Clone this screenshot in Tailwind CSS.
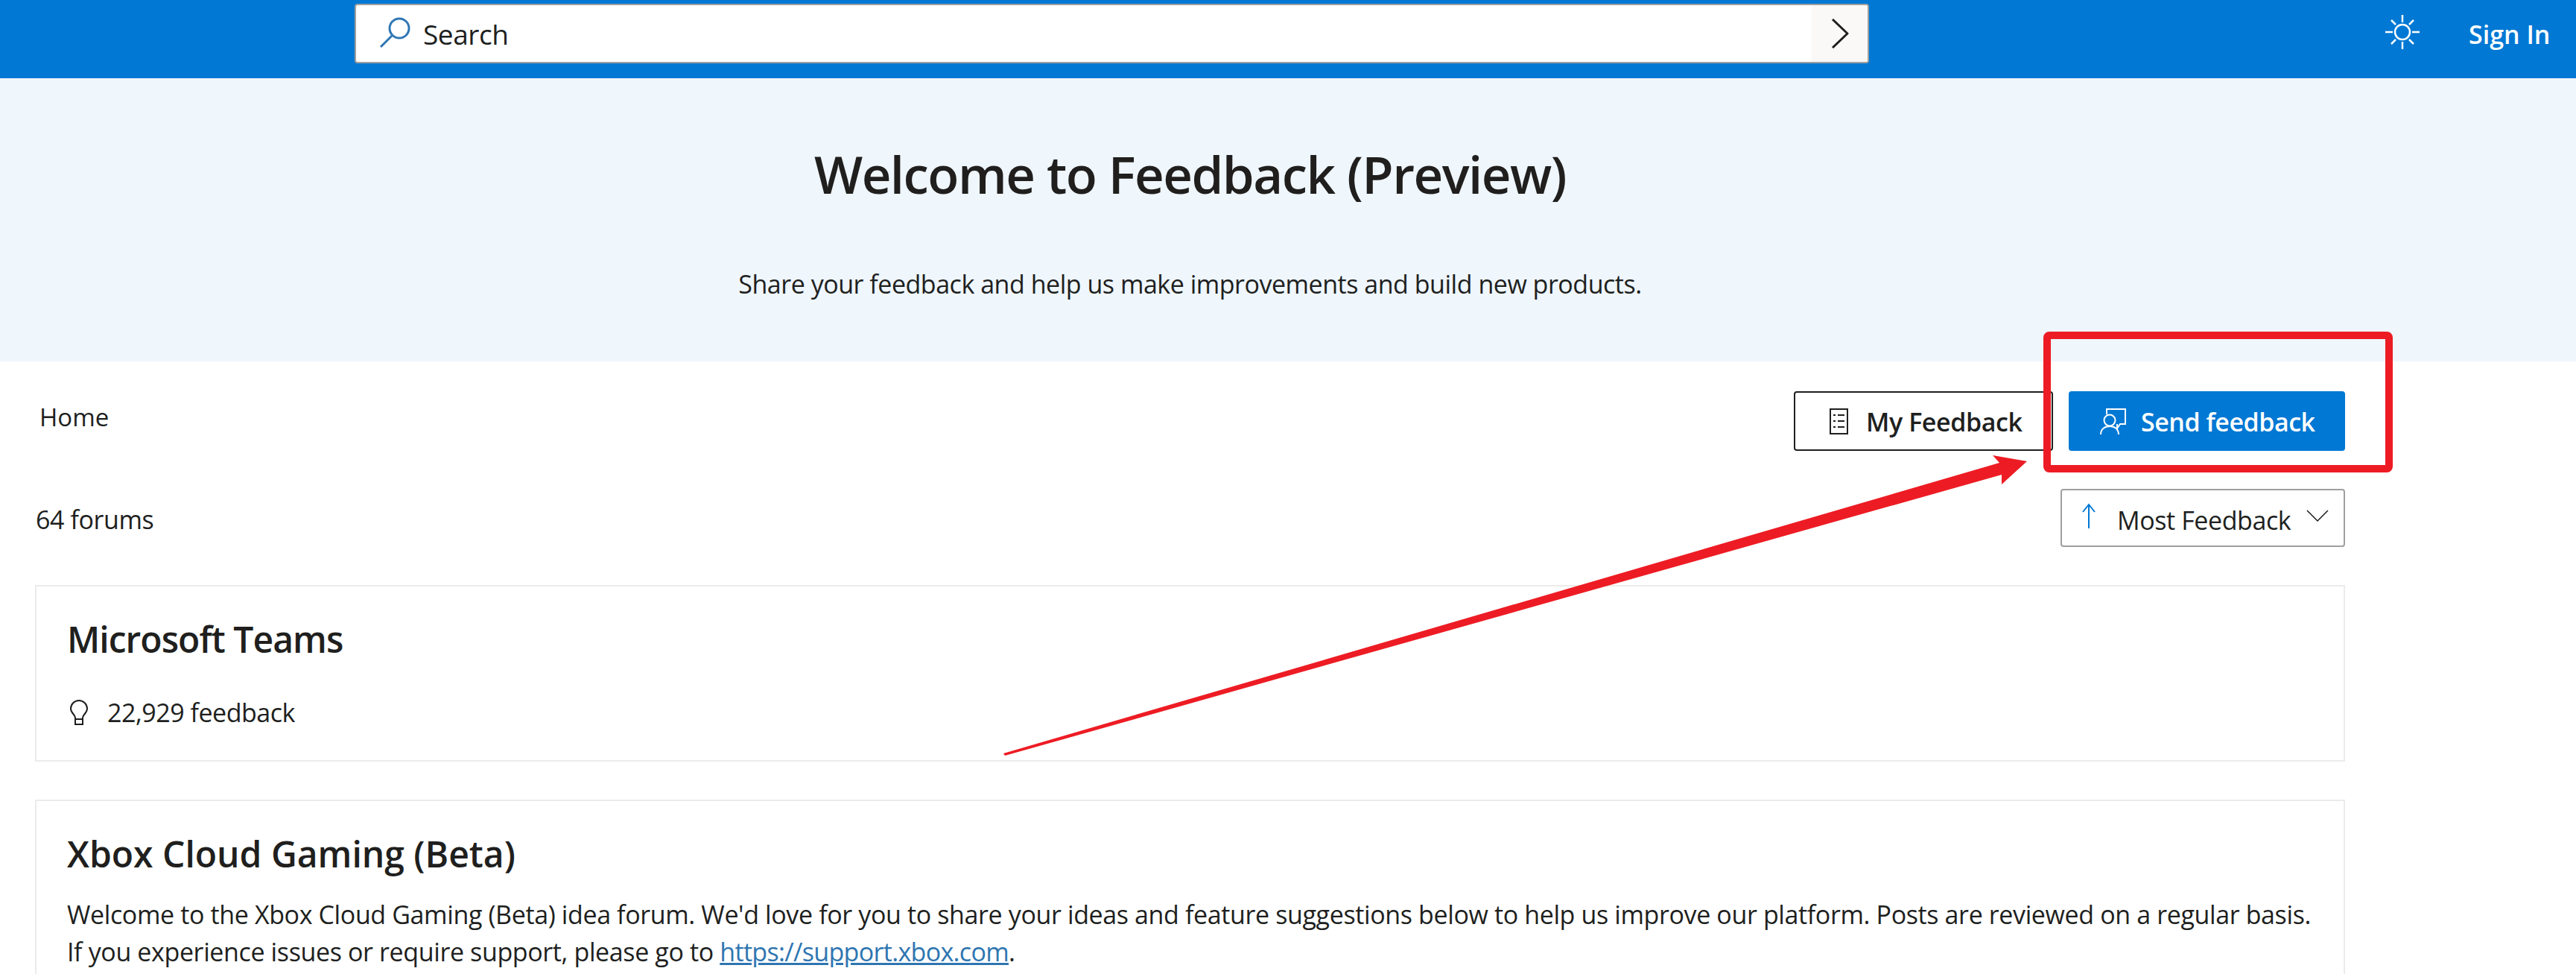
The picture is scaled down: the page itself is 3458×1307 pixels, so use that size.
<!DOCTYPE html>
<html lang="en">
<head>
  <meta charset="UTF-8">
  <title>Feedback</title>
  <script src="https://cdn.jsdelivr.net/npm/@tailwindcss/browser@4"></script>
</head>
<body class="relative h-[1307px] overflow-hidden bg-white text-[#201f1e] font-['Open_Sans','Noto_Sans',sans-serif]">
  <!-- top bar -->
  <header class="flex h-[105px] items-start bg-[#0078d4] pt-[5px] pl-[476px]">
    <div class="flex h-[80px] w-[2033px] items-stretch overflow-hidden rounded-[4px] border-2 border-[#a19f9d] bg-white">
      <div class="flex flex-1 items-center">
        <svg class="ml-[30px] h-[46px] w-[46px]" viewBox="0 0 46 46" fill="none" stroke="#2f77b5" stroke-width="3">
          <circle cx="28" cy="16" r="13"/>
          <path d="M18 26 3 41"/>
        </svg>
        <span class="ml-[14px] mt-[2px] text-[37px] tracking-[-0.012em]">Search</span>
      </div>
      <div class="flex w-[75px] items-center justify-center bg-[#faf9f8]">
        <svg class="h-[40px] w-[24px]" viewBox="0 0 24 40" fill="none" stroke="#201f1e" stroke-width="3">
          <path d="M2 1 22 20 2 39" stroke-linejoin="round"/>
        </svg>
      </div>
    </div>
    <svg class="ml-[691px] mt-[13px] h-[50px] w-[50px]" viewBox="0 0 50 50" fill="none" stroke="#fff" stroke-width="2.5">
      <circle cx="25" cy="25" r="10"/>
      <path d="M25 2v10M25 38v10M2 25h10M38 25h10M10 9l6 6M40 9l-6 6M10 41l6-6M40 41l-6-6"/>
    </svg>
    <span class="ml-[64px] mt-[16px] text-[34px] font-semibold text-white">Sign In</span>
  </header>

  <!-- hero -->
  <section class="h-[380px] bg-[#eff6fc] pr-[263px] pt-[84px] text-center">
    <h1 class="text-[69px] leading-[89px] font-semibold tracking-[-0.022em]">Welcome to Feedback (Preview)</h1>
    <p class="mt-[79px] text-[34px] leading-[48px] tracking-[-0.014em]">Share your feedback and help us make improvements and build new products.</p>
  </section>

  <main class="w-[3148px] pl-[47px]">
    <div class="mt-[40px] flex h-[80px] items-start justify-between">
      <span class="ml-[6px] mt-[11px] text-[33px] leading-[48px]">Home</span>
      <div class="flex gap-[21px]">
        <button class="flex h-[80px] w-[348px] items-center rounded-[4px] border-2 border-[#201f1e] pl-[46px]">
          <svg class="h-[35px] w-[25px]" viewBox="0 0 25 35" fill="none" stroke="#201f1e" stroke-width="2">
            <rect x="1" y="1" width="23" height="33"/>
            <path d="M5 9h3M11 9h9M5 17h3M11 17h9M5 25h3M11 25h9"/>
          </svg>
          <span class="ml-[24px] mt-[2px] text-[34px] font-semibold tracking-[-0.012em]">My Feedback</span>
        </button>
        <button class="flex h-[80px] w-[371px] items-center rounded-[4px] bg-[#0078d4] pl-[42px] text-white">
          <svg class="h-[35px] w-[35px]" viewBox="0 0 35 35" fill="none" stroke="#fff" stroke-width="2">
            <path d="M9 8V1h25v20h-7l-4 6v-6"/>
            <circle cx="13" cy="16" r="7.5"/>
            <path d="M1 35c0-7 5-11 12-11s12 4 12 11"/>
          </svg>
          <span class="ml-[20px] mt-[2px] text-[34px] font-semibold tracking-[-0.014em]">Send feedback</span>
        </button>
      </div>
    </div>

    <div class="mt-[51px] flex h-[78px] items-start justify-between">
      <span class="ml-px mt-[17px] text-[34px] leading-[48px] tracking-[-0.012em]">64 forums</span>
      <button class="flex h-[78px] w-[382px] items-center rounded-[4px] border-2 border-[#a19f9d] pl-[27px]">
        <svg class="-mt-[6px] h-[34px] w-[18px]" viewBox="0 0 18 34" fill="none" stroke="#0078d4" stroke-width="2">
          <path d="M9 34V2M1 12 9 2l8 10"/>
        </svg>
        <span class="ml-[29px] mt-[6px] text-[34px] tracking-[-0.012em]">Most Feedback</span>
        <svg class="-mt-[6px] ml-[21px] h-[16px] w-[30px]" viewBox="0 0 30 16" fill="none" stroke="#201f1e" stroke-width="1.5">
          <path d="M1 1l14 14L29 1"/>
        </svg>
      </button>
    </div>

    <article class="mt-[51px] h-[237px] border-2 border-[#edebe9] pl-[41px] pt-[40px]">
      <h2 class="text-[48px] leading-[62px] font-semibold tracking-[-0.02em]">Microsoft Teams</h2>
      <div class="mt-[43px] flex items-center">
        <svg class="ml-[4px] h-[34px] w-[24px]" viewBox="0 0 24 34" fill="none" stroke="#201f1e" stroke-width="2">
          <path d="M7 24C7 20 1 18 1 12a11 11 0 0 1 22 0c0 6-6 8-6 12v9H7zM7 26h10"/>
        </svg>
        <span class="ml-[26px] text-[34px] leading-[48px] tracking-[-0.014em]">22,929 feedback</span>
      </div>
    </article>

    <article class="mt-[51px] h-[400px] border-2 border-[#edebe9] pl-[41px] pt-[40px]">
      <h2 class="text-[48px] leading-[62px] font-semibold">Xbox Cloud Gaming (Beta)</h2>
      <p class="mt-[25px] whitespace-nowrap text-[34px] leading-[50px] tracking-[-0.011em]">
        Welcome to the Xbox Cloud Gaming (Beta) idea forum. We'd love for you to share your ideas and feature suggestions below to help us improve our platform. Posts are reviewed on a regular basis.<br>
        If you experience issues or require support, please go to <a class="text-[#2f76b1] tracking-[-0.02em] underline" href="#">https://support.xbox.com</a>.
      </p>
    </article>
  </main>

  <!-- red annotation drawn over the page -->
  <svg class="pointer-events-none absolute inset-0" width="3458" height="1307" viewBox="0 0 3458 1307" fill="none">
    <rect x="2748" y="450" width="459" height="179" rx="3" stroke="#ed1c24" stroke-width="10"/>
    <path d="M1347 1011 2684 621 2675 611 2721 619 2687 650 2687 637 1349 1014Z" fill="#ed1c24"/>
  </svg>
</body>
</html>
